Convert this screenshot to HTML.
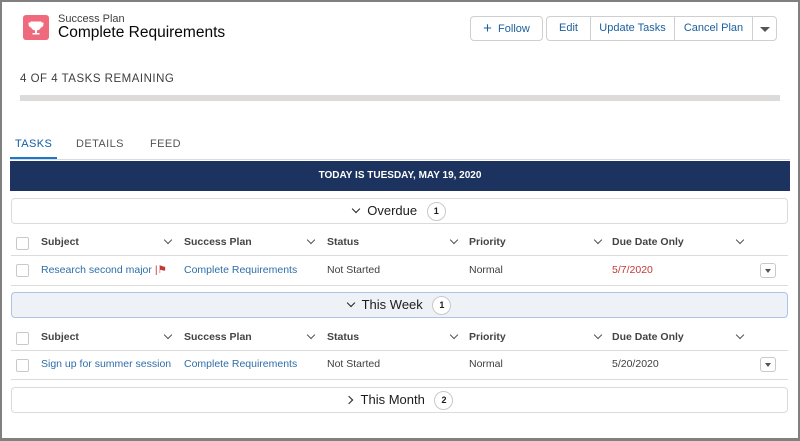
<!DOCTYPE html>
<html><head><meta charset="utf-8"><style>
*{box-sizing:border-box;margin:0;padding:0}
body{width:800px;height:441px;overflow:hidden;background:#fff;font-family:"Liberation Sans",sans-serif;color:#3e3e3c;position:relative}
.frame{position:absolute;left:0;top:0;width:800px;height:441px;border:2px solid #808080;border-bottom-width:3px}
.a{position:absolute;white-space:nowrap}
.btn{position:absolute;top:16px;height:25px;border:1px solid #cfcfcf;background:#fff;font-size:11px;line-height:23px;text-align:center;color:#1b5f9e}
.box{position:absolute;left:11px;width:777px;height:26px;border:1px solid #dddbda;border-radius:4px;background:#fff}
.sec{position:absolute;left:0;right:0;text-align:center;font-size:13px;line-height:24px;color:#1c1c1c}
.badge{display:inline-block;width:19px;height:19px;border:1px solid #c9c9c9;border-radius:50%;font-size:9px;line-height:17px;text-align:center;margin-left:6px;vertical-align:1px;font-weight:bold;background:#fff}
.sc{display:inline-block;width:6px;height:6px;border-right:1.2px solid #222;border-bottom:1.2px solid #222;transform:rotate(45deg);vertical-align:3px;margin-right:8px}
.sr{display:inline-block;width:6px;height:6px;border-right:1.2px solid #222;border-bottom:1.2px solid #222;transform:rotate(-45deg);vertical-align:1px;margin-right:9px}
.cb{position:absolute;left:16px;width:13px;height:13px;border:1px solid #c9c9c9;border-radius:2px;background:#fff}
.th{position:absolute;font-size:10.5px;font-weight:bold;color:#444}
.td{position:absolute;font-size:10.5px;color:#3e3e3c}
.lnk{color:#2e6ea8}
.chev{position:absolute;width:6px;height:6px;border-right:1px solid #555;border-bottom:1px solid #555;transform:rotate(45deg)}
.line{position:absolute;left:11px;width:777px;height:1px;background:#dddbda}
.dd{position:absolute;left:760px;width:16px;height:15px;border:1px solid #c9c9c9;border-radius:3px;background:#fff}
.dd:after{content:"";position:absolute;left:4px;top:5px;border-left:3.5px solid transparent;border-right:3.5px solid transparent;border-top:4px solid #555}
</style></head><body>
<div class="frame"></div>
<div class="a" style="left:23px;top:15px;width:26px;height:25px;background:#ee6a7c;border-radius:3px">
<svg width="26" height="25" viewBox="0 0 26 25"><path d="M8 7h10v3c0 3-2 5-5 5s-5-2-5-5z M8 8H6v1c0 2 1 3 2.5 3 M18 8h2v1c0 2-1 3-2.5 3" fill="#fff" stroke="#fff" stroke-width="1"/><rect x="12" y="15" width="2" height="3" fill="#fff"/><rect x="9.5" y="18" width="7" height="1.5" fill="#fff"/></svg></div>
<div class="a" style="left:58px;top:13px;font-size:11px;color:#3e3e3c">Success Plan</div>
<div class="a" style="left:58px;top:24px;font-size:15.5px;color:#080707">Complete Requirements</div>
<div class="btn" style="left:470px;width:73px;border-radius:4px"><span style="font-size:15px;vertical-align:-1px">+</span>&nbsp; Follow</div>
<div class="btn" style="left:546px;width:45px;border-radius:4px 0 0 4px">Edit</div>
<div class="btn" style="left:590px;width:85px">Update Tasks</div>
<div class="btn" style="left:674px;width:79px">Cancel Plan</div>
<div class="btn" style="left:752px;width:25px;border-radius:0 4px 4px 0"><span style="position:absolute;left:7px;top:10px;border-left:5px solid transparent;border-right:5px solid transparent;border-top:5px solid #555"></span></div>
<div class="a" style="left:20px;top:73px;font-size:11.5px;letter-spacing:.5px;color:#3e3e3c">4 OF 4 TASKS REMAINING</div>
<div class="a" style="left:20px;top:95px;width:760px;height:6px;background:#dddbda"></div>
<div class="a" style="left:15px;top:138px;font-size:11px;letter-spacing:.4px;color:#0f5fa6">TASKS</div>
<div class="a" style="left:76px;top:138px;font-size:11px;letter-spacing:.4px;color:#555">DETAILS</div>
<div class="a" style="left:150px;top:138px;font-size:11px;letter-spacing:.4px;color:#555">FEED</div>
<div class="a" style="left:10px;top:159px;width:780px;height:1px;background:#dddbda"></div>
<div class="a" style="left:10px;top:157px;width:47px;height:2px;background:#1b77c9"></div>
<div class="a" style="left:10px;top:161px;width:780px;height:30px;background:#1b335e;color:#fff;font-size:10px;font-weight:bold;text-align:center;line-height:30px">TODAY IS TUESDAY, MAY 19, 2020</div>

<div class="box" style="top:198px"><div class="sec"><span class="sc"></span>Overdue <span class="badge">1</span></div></div>
<div class="cb" style="top:237px"></div>
<div class="th" style="left:41px;top:236px">Subject</div><div class="chev" style="left:165px;top:237px"></div>
<div class="th" style="left:184px;top:236px">Success Plan</div><div class="chev" style="left:308px;top:237px"></div>
<div class="th" style="left:327px;top:236px">Status</div><div class="chev" style="left:451px;top:237px"></div>
<div class="th" style="left:469px;top:236px">Priority</div><div class="chev" style="left:595px;top:237px"></div>
<div class="th" style="left:612px;top:236px">Due Date Only</div><div class="chev" style="left:737px;top:237px"></div>
<div class="line" style="top:255px"></div>
<div class="cb" style="top:264px"></div>
<div class="td lnk" style="left:41px;top:264px">Research second major <span style="color:#c23934">|&#9873;</span></div>
<div class="td lnk" style="left:184px;top:264px">Complete Requirements</div>
<div class="td" style="left:327px;top:264px">Not Started</div>
<div class="td" style="left:469px;top:264px">Normal</div>
<div class="td" style="left:612px;top:264px;color:#c23934">5/7/2020</div>
<div class="dd" style="top:263px"></div>
<div class="line" style="top:285px"></div>

<div class="box" style="top:292px;background:#eef1f6;border-color:#a9c6e8"><div class="sec"><span class="sc"></span>This Week <span class="badge">1</span></div></div>
<div class="cb" style="top:332px"></div>
<div class="th" style="left:41px;top:331px">Subject</div><div class="chev" style="left:165px;top:332px"></div>
<div class="th" style="left:184px;top:331px">Success Plan</div><div class="chev" style="left:308px;top:332px"></div>
<div class="th" style="left:327px;top:331px">Status</div><div class="chev" style="left:451px;top:332px"></div>
<div class="th" style="left:469px;top:331px">Priority</div><div class="chev" style="left:595px;top:332px"></div>
<div class="th" style="left:612px;top:331px">Due Date Only</div><div class="chev" style="left:737px;top:332px"></div>
<div class="line" style="top:350px"></div>
<div class="cb" style="top:359px"></div>
<div class="td lnk" style="left:41px;top:358px">Sign up for summer session</div>
<div class="td lnk" style="left:184px;top:358px">Complete Requirements</div>
<div class="td" style="left:327px;top:358px">Not Started</div>
<div class="td" style="left:469px;top:358px">Normal</div>
<div class="td" style="left:612px;top:358px">5/20/2020</div>
<div class="dd" style="top:357px"></div>
<div class="line" style="top:379px"></div>

<div class="box" style="top:387px"><div class="sec"><span class="sr"></span>This Month <span class="badge">2</span></div></div>
</body></html>
